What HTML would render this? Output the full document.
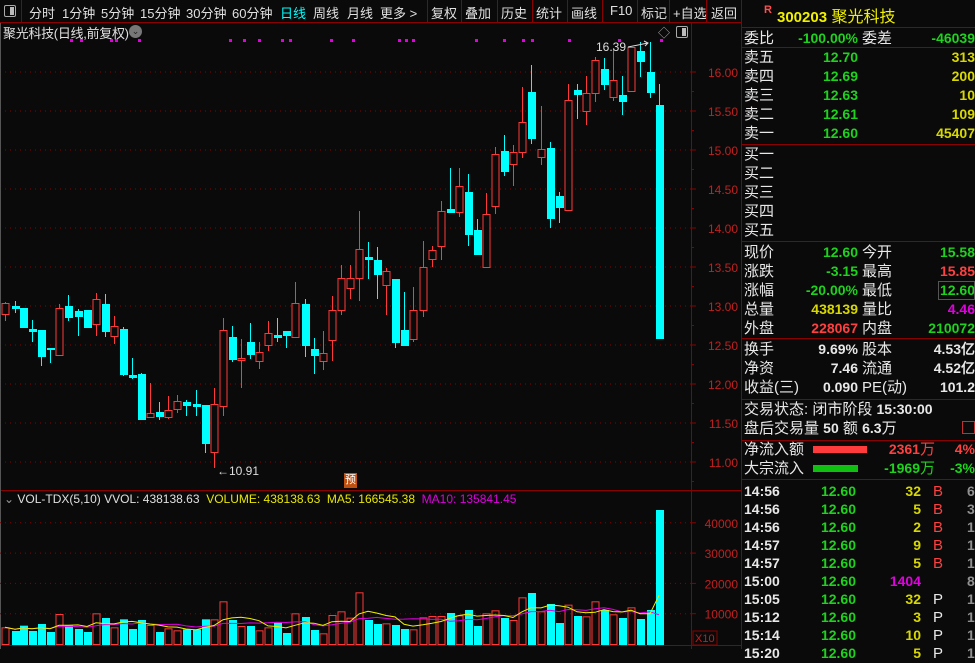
<!DOCTYPE html>
<html><head><meta charset="utf-8">
<style>
*{margin:0;padding:0;box-sizing:border-box}
body{width:975px;height:649px;background:#0a0a0a;overflow:hidden;position:relative;font-family:"Liberation Sans","Noto Sans CJK SC",sans-serif;color:#ddd}
.a{position:absolute;white-space:nowrap}
.tb{font-size:13px;color:#e0e0e0;top:3px}
.r{text-align:right}
.rp{font-size:15px;line-height:19px}
.w{color:#e8e8e8}.g{color:#1ed21e}.y{color:#d8d800}.rd{color:#ff4040}.m{color:#e000e0}.c{color:#00ffff}.gr{color:#909090}
.hl{position:absolute;height:1px;background:#8b0000}
.vl{position:absolute;width:1px;background:#8b0000}
.num{font-family:"Liberation Sans",sans-serif;font-weight:bold;font-size:14px}
</style></head><body>
<div class="a" style="left:0;top:0;width:975px;height:22px;background:#0a0a0a"></div>
<div class="hl" style="left:0;top:22px;width:741px"></div>
<div class="a" style="left:4px;top:5px;width:12px;height:12px;border:1px solid #aaa;border-radius:2px"></div>
<div class="a" style="left:10px;top:7px;width:4px;height:8px;background:#bbb"></div>
<div class="vl" style="left:21px;top:0;height:22px"></div>
<div class="a tb" style="left:29px">分时</div>
<div class="a tb" style="left:62px">1分钟</div>
<div class="a tb" style="left:101px">5分钟</div>
<div class="a tb" style="left:140px">15分钟</div>
<div class="a tb" style="left:186px">30分钟</div>
<div class="a tb" style="left:232px">60分钟</div>
<div class="a tb c" style="left:280px">日线</div>
<div class="a tb" style="left:313px">周线</div>
<div class="a tb" style="left:347px">月线</div>
<div class="a tb" style="left:380px">更多 &gt;</div>
<div class="vl" style="left:427px;top:0;height:22px"></div>
<div class="a tb" style="left:431px">复权</div>
<div class="vl" style="left:461px;top:0;height:22px"></div>
<div class="a tb" style="left:465px">叠加</div>
<div class="vl" style="left:497px;top:0;height:22px"></div>
<div class="a tb" style="left:501px">历史</div>
<div class="vl" style="left:532px;top:0;height:22px"></div>
<div class="a tb" style="left:536px">统计</div>
<div class="vl" style="left:567px;top:0;height:22px"></div>
<div class="a tb" style="left:571px">画线</div>
<div class="vl" style="left:602px;top:0;height:22px"></div>
<div class="a tb" style="left:610px">F10</div>
<div class="vl" style="left:637px;top:0;height:22px"></div>
<div class="a tb" style="left:641px">标记</div>
<div class="vl" style="left:669px;top:0;height:22px"></div>
<div class="a tb" style="left:673px">+自选</div>
<div class="vl" style="left:706px;top:0;height:22px"></div>
<div class="a tb" style="left:711px">返回</div>
<div class="vl" style="left:741px;top:0;height:649px"></div>

<svg class="a" style="left:0;top:23px" width="741" height="626" id="ch"></svg>
<div class="a" style="left:3px;top:23px;font-size:13px;color:#e0e0e0;letter-spacing:-0.3px">聚光科技(日线,前复权)</div>
<div class="a" style="left:129px;top:25px;width:13px;height:13px;border-radius:7px;background:#777;color:#222;font-size:9px;line-height:13px;text-align:center">⌄</div>
<div class="a" style="left:658px;top:24px;font-size:12px;color:#aaa">◇</div>
<div class="a" style="left:676px;top:26px;width:12px;height:12px;border:1px solid #aaa;border-radius:2px"></div>
<div class="a" style="left:682px;top:28px;width:4px;height:8px;background:#bbb"></div>
<div class="a" style="left:596px;top:40px;font-size:12px;color:#ddd">16.39</div>
<div class="a" style="left:217px;top:464px;font-size:12px;color:#ddd">←10.91</div>
<div class="a" style="left:344px;top:473px;width:13px;height:15px;background:#c05010;color:#fff;font-size:11px;line-height:15px;text-align:center">预</div>
<div class="a" style="left:4px;top:492px;font-size:12px"><span style="color:#999">⌄</span> <span style="color:#e0e0e0">VOL-TDX(5,10) VVOL: 438138.63</span> <span class="y" style="color:#e8e800">&nbsp;VOLUME: 438138.63 &nbsp;MA5: 166545.38</span> <span class="m">&nbsp;MA10: 135841.45</span></div>

<div class="a" style="left:764px;top:4px;font-size:11px;font-weight:bold;color:#ff5050">R</div>
<div class="a" style="left:777px;top:3px;font-size:16px;color:#f0f000"><b style="font-size:15px">300203</b> 聚光科技</div>
<div class="hl" style="left:742px;top:27px;width:233px"></div>
<div id="rp"></div>

<script>
const C=[
[5,'R',302,303,314,321],[15,'C',301,306,308,313],[23,'C',308,308,327,328],[32,'C',320,329,331,342],[41,'C',330,330,356,366],
[50,'C',348,348,349,363],[59,'R',304,308,355,356],[68,'C',295,306,317,321],[78,'C',309,311,316,336],[87,'C',310,310,327,328],
[96,'R',293,299,324,336],[105,'C',294,304,331,337],[114,'R',316,326,336,344],[123,'C',327,329,374,376],[132,'C',358,375,377,379],
[141,'C',373,374,419,419],[150,'R',383,413,417,417],[159,'C',402,412,416,420],[168,'R',396,410,417,419],[177,'R',395,401,409,413],
[186,'C',400,402,405,416],[196,'C',390,404,406,416],[205,'C',405,405,443,453],[214,'R',388,404,452,468],[223,'R',318,330,406,416],
[232,'C',326,337,359,362],[241,'R',339,358,360,388],[250,'C',323,342,354,359],[259,'R',342,352,361,369],[268,'R',321,333,345,351],
[277,'C',318,335,337,342],[286,'C',331,331,335,348],[295,'R',282,303,337,337],[305,'C',299,304,345,357],[314,'C',338,349,355,374],
[323,'R',331,353,361,370],[332,'R',296,310,340,361],[341,'R',265,278,310,315],[350,'R',265,278,288,299],[359,'R',211,249,278,301],
[368,'C',242,257,259,279],[377,'C',247,260,274,299],[386,'R',268,271,285,315],[395,'C',279,279,342,348],[404,'C',292,330,345,346],
[413,'R',287,310,339,342],[423,'R',241,267,310,317],[432,'R',246,250,259,267],[441,'R',201,211,246,260],[450,'C',168,209,212,212],
[459,'R',168,186,212,217],[468,'C',174,192,234,246],[477,'C',219,230,254,255],[486,'R',193,214,267,267],[495,'R',147,154,206,214],
[504,'C',135,151,171,176],[513,'R',145,152,164,186],[522,'R',87,122,152,158],[531,'C',65,92,138,144],[541,'R',106,149,157,165],
[550,'C',142,148,218,228],[559,'C',192,196,207,223],[568,'R',84,100,210,210],[577,'C',84,90,94,119],[586,'R',76,93,111,125],
[595,'R',57,60,93,102],[604,'C',58,69,84,90],[613,'R',48,80,97,101],[622,'C',76,95,101,115],[631,'R',47,47,91,91],
[640,'C',42,51,61,77],[650,'C',42,72,92,98],[659,'C',84,105,338,338]];
const V=[337,348,332,348,327,351,297,332,342,351,295,309,337,313,342,315,330,351,340,346,343,343,313,313,259,315,333,333,346,337,323,354,295,306,345,355,300,289,308,232,315,327,325,330,342,343,307,303,303,294,301,285,333,295,286,309,315,247,234,289,267,324,269,303,304,259,285,298,309,277,312,285,0];
let s='';const O=23;
for(let i=0;i<11;i++){const y=72+i*39-O;s+=`<line x1="0" x2="691" y1="${y}" y2="${y}" stroke="#8b0000" stroke-dasharray="1,4"/>`;
 s+=`<text x="738" y="${y+5}" fill="#c02020" font-size="12" text-anchor="end" font-family="Liberation Sans">${(16-i*0.5).toFixed(2)}</text>`;
 s+=`<line x1="691" x2="696" y1="${y}" y2="${y}" stroke="#8b0000"/>`;
 s+=`<line x1="691" x2="694" y1="${y+19.5}" y2="${y+19.5}" stroke="#8b0000"/>`;}
s+=`<line x1="691.5" x2="691.5" y1="0" y2="626" stroke="#8b0000"/>`;
s+=`<line x1="0" x2="741" y1="${490-O}.5" y2="${490-O}.5" stroke="#8b0000"/>`;
s+=`<line x1="0" x2="741" y1="${645-O}.5" y2="${645-O}.5" stroke="#8b0000"/>`;
s+=`<line x1="0.5" x2="0.5" y1="0" y2="626" stroke="#555"/>`;
[70,80,110,115,138,229,243,258,281,289,330,352,398,405,412,475,503,522,531,568,618,660].forEach(x=>{s+=`<rect x="${x}" y="${39-O}" width="3" height="3" fill="#e000e0"/>`});
C.forEach(c=>{const[x,t,wt,bt,bb,wb]=c;const col=t=='R'?'#ff3838':'#00ffff';
 s+=`<line x1="${x+.5}" x2="${x+.5}" y1="${wt-O}" y2="${wb-O}" stroke="${col}"/>`;
 const h=Math.max(bb-bt,1);
 if(t=='R') s+=`<rect x="${x-3}" y="${bt-O+.5}" width="7" height="${h}" fill="#0a0a0a" stroke="${col}"/>`;
 else s+=`<rect x="${x-3}" y="${bt-O}" width="8" height="${h+1}" fill="${col}"/>`;});
s+=`<path d="M628 ${47-O} L648 ${43-O} M644 ${41-O} L648 ${43-O} L645 ${46-O}" stroke="#ddd" fill="none"/>`;
const vb=644;[40000,30000,20000,10000].forEach(v=>{const y=vb-v*0.00303;s+=`<line x1="0" x2="691" y1="${y-O}" y2="${y-O}" stroke="#8b0000" stroke-dasharray="1,4"/><line x1="691" x2="696" y1="${y-O}" y2="${y-O}" stroke="#8b0000"/><text x="738" y="${y-O+5}" fill="#c02020" font-size="12" text-anchor="end" font-family="Liberation Sans">${v}</text>`});
s+=`<rect x="693" y="${631-O}" width="24" height="14" fill="none" stroke="#8b0000"/><text x="695" y="${642-O}" fill="#c02020" font-size="11" font-family="Liberation Sans">X10</text>`;
const VY=V.map(v=>515+v/3);VY[72]=510;
C.forEach((c,i)=>{const x=c[0],t=c[1],y=VY[i];const col=t=='R'?'#ff3838':'#00ffff';
 if(t=='R') s+=`<rect x="${x-3}" y="${y-O+.5}" width="7" height="${vb-y}" fill="none" stroke="${col}"/>`;
 else s+=`<rect x="${x-3}" y="${y-O}" width="8" height="${vb-y+1}" fill="${col}"/>`;});
function ma(n,col){let p=[];for(let i=0;i<VY.length;i++){let a=0,k=0;for(let j=Math.max(0,i-n+1);j<=i;j++){a+=vb-VY[j];k++}
 let v=a/k;if(i==72)v=n==5?(vb-VY[71]+vb-VY[70]+vb-VY[69]+vb-VY[68])/4*1.6:v*0.7; p.push(C[i][0]+','+(vb-v-O).toFixed(1))}
 s+=`<polyline points="${p.join(' ')}" fill="none" stroke="${col}"/>`}
ma(10,'#e000e0');ma(5,'#f0f000');
document.getElementById('ch').innerHTML=s;

let r='';
function T(x,y,t,cl,al,extra){r+=`<div class="a rp ${cl}" style="${al=='r'?'right:'+(975-x)+'px':'left:'+x+'px'};top:${y}px;${extra||''}">${t}</div>`}
function H(y){r+=`<div class="hl" style="left:742px;top:${y}px;width:233px"></div>`}
T(744,29,'委比','w');T(858,29,'<span class="num">-100.00%</span>','g','r');T(862,29,'委差','w');T(975,29,'<span class="num">-46039</span>','g','r');
H(47);
[['卖五','12.70','313'],['卖四','12.69','200'],['卖三','12.63','10'],['卖二','12.61','109'],['卖一','12.60','45407']].forEach((a,i)=>{const y=48+i*19;
 T(744,y,a[0],'w');T(858,y,'<span class="num">'+a[1]+'</span>','g','r');T(975,y,'<span class="num">'+a[2]+'</span>','y','r')});
H(144);
['买一','买二','买三','买四','买五'].forEach((a,i)=>T(744,145+i*19,a,'w'));
H(241);
[['现价','12.60','g','今开','15.58','g'],['涨跌','-3.15','g','最高','15.85','rd'],['涨幅','-20.00%','g','最低','12.60','g'],['总量','438139','y','量比','4.46','m'],['外盘','228067','rd','内盘','210072','g']].forEach((a,i)=>{const y=243+i*19;
 T(744,y,a[0],'w');T(858,y,'<span class="num">'+a[1]+'</span>',a[2],'r');T(862,y,a[3],'w');T(975,y,'<span class="num">'+a[4]+'</span>',a[5],'r')});
r+=`<div class="a" style="left:938px;top:281px;width:37px;height:19px;border:1px solid #555"></div>`;
H(338);
[['换手','9.69%','股本','4.53亿'],['净资','7.46','流通','4.52亿'],['收益(三)','0.090','PE(动)','101.2']].forEach((a,i)=>{const y=340+i*19;
 T(744,y,a[0],'w');T(858,y,'<span class="num">'+a[1]+'</span>','w','r');T(862,y,a[2],'w');T(975,y,'<span class="num">'+a[3]+'</span>','w','r')});
H(399);
T(744,400,'交易状态: 闭市阶段 <span class="num">15:30:00</span>','w');
T(744,419,'盘后交易量 <span class="num">50</span> 额 <span class="num">6.3</span>万','w');
r+=`<div class="a" style="left:962px;top:421px;width:13px;height:13px;border:1px solid #c03030"></div>`;
H(440);
T(744,440,'净流入额','w');r+=`<div class="a" style="left:813px;top:446px;width:54px;height:7px;background:#ff3b3b"></div>`;
T(935,440,'<span class="num">2361</span>万','rd','r');T(975,440,'<span class="num">4%</span>','rd','r');
T(744,459,'大宗流入','w');r+=`<div class="a" style="left:813px;top:465px;width:45px;height:7px;background:#10c010"></div>`;
T(935,459,'<span class="num">-1969</span>万','g','r');T(975,459,'<span class="num">-3%</span>','g','r');
H(479);
[['14:56','32','B','6'],['14:56','5','B','3'],['14:56','2','B','1'],['14:57','9','B','1'],['14:57','5','B','1'],['15:00','1404','','84'],['15:05','32','P','1'],['15:12','3','P','1'],['15:14','10','P','1'],['15:20','5','P','1']].forEach((a,i)=>{const y=482+i*18;
 T(744,y,'<span class="num">'+a[0]+'</span>','w');T(856,y,'<span class="num">12.60</span>','g','r');
 T(921,y,'<span class="num">'+a[1]+'</span>',a[1]=='1404'?'m':'y','r');
 T(933,y,'<span style="font-size:15px">'+a[2]+'</span>',a[2]=='B'?'rd':'w');
 T(967,y,'<span class="num">'+a[3]+'</span>','gr')});
document.getElementById('rp').innerHTML=r;
</script>
</body></html>
